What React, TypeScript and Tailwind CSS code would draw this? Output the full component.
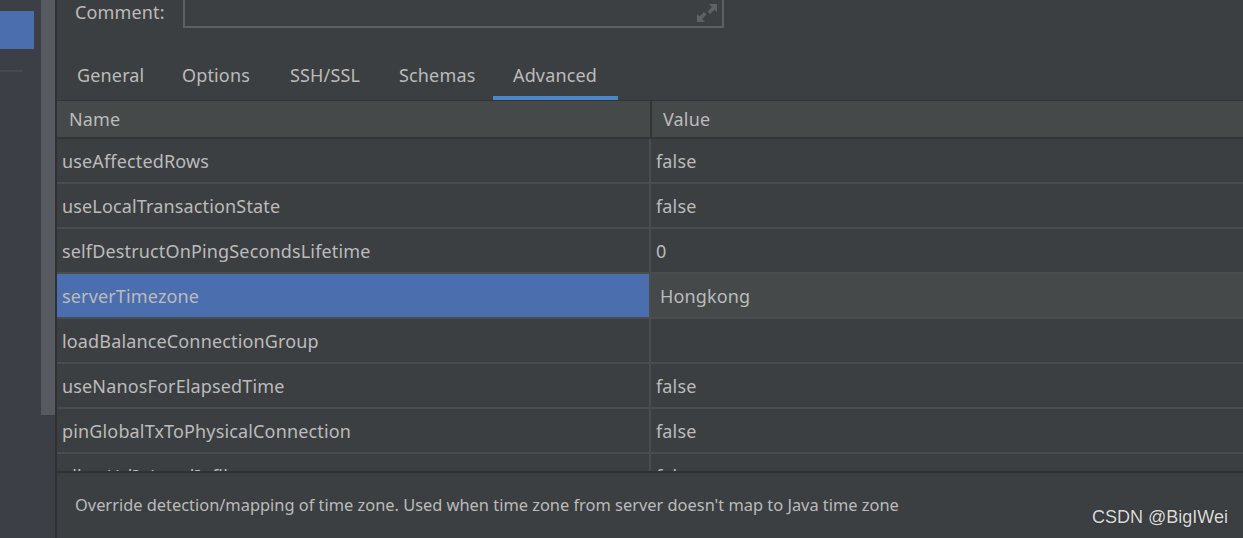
import React from "react";

const rows: { name: string; value: string; selected?: boolean }[] = [
  { name: "useAffectedRows", value: "false" },
  { name: "useLocalTransactionState", value: "false" },
  { name: "selfDestructOnPingSecondsLifetime", value: "0" },
  { name: "serverTimezone", value: "Hongkong", selected: true },
  { name: "loadBalanceConnectionGroup", value: "" },
  { name: "useNanosForElapsedTime", value: "false" },
  { name: "pinGlobalTxToPhysicalConnection", value: "false" },
  { name: "allowUrlInLocalInfile", value: "false" },
];

const tabs = [
  { label: "General", w: "w-[105px]" },
  { label: "Options", w: "w-[108px]" },
  { label: "SSH/SSL", w: "w-[109px]" },
  { label: "Schemas", w: "w-[114px]" },
  { label: "Advanced", w: "w-[125px]", active: true },
];

export default function App() {
  return (
    <div
      className="relative w-[1243px] h-[538px] flex overflow-hidden bg-[#3c3f41] text-[#bbbbbb] tracking-[0.15px]"
      style={{ fontFamily: '"Noto Sans", "Open Sans", sans-serif' }}
    >
      {/* left sidebar */}
      <div className="w-[41px] shrink-0 bg-[#3c3f45] flex flex-col">
        <div className="mt-[11px] h-[38px] w-[34px] bg-[#4b6eaf]" />
        <div className="mt-[21px] h-[2px] w-[23px] bg-[#46494e]" />
      </div>
      {/* scrollbar */}
      <div className="w-[14px] shrink-0 bg-[#3c3f45]">
        <div className="h-[415px] w-full bg-[#575a60]" />
      </div>
      <div className="w-[2px] shrink-0 bg-[#2f3133]" />

      {/* main */}
      <div className="flex-1 flex flex-col min-w-0">
        {/* comment */}
        <div className="h-[30px] flex shrink-0">
          <div className="w-[126px] pl-[18px] text-[18px] leading-[24px]">Comment:</div>
          <div className="relative w-[541px] h-[30px] -mt-[2px] border-2 border-[#5e6060] bg-[#3d4042]">
            <svg
              className="absolute right-[4px] top-[3px]"
              width="22"
              height="20"
              viewBox="0 0 22 20"
              fill="#5f6264"
            >
              <path d="M13 1 L21 1 L21 9 L18.5 6.5 L14 11 L11.5 8.5 L16 4 Z" />
              <path d="M1 19 L1 11 L3.5 13.5 L8 9 L10.5 11.5 L6 16 L9 19 Z" />
            </svg>
          </div>
        </div>

        {/* tabs */}
        <div className="h-[71px] shrink-0 flex items-end border-b border-[#313335]">
          {tabs.map((t) => (
            <div key={t.label} className={`${t.w} h-[41px] flex flex-col shrink-0`}>
              <div className="flex-1 pl-[20px] text-[18px] leading-[24px] pt-[4px]">{t.label}</div>
              <div className={`h-[4px] ${t.active ? "bg-[#4a88c7]" : ""}`} />
            </div>
          ))}
        </div>

        {/* header */}
        <div className="h-[38px] shrink-0 flex bg-[#45494a] border-b-2 border-[#323435]">
          <div className="w-[593px] pl-[12px] pt-[1px] text-[18px] leading-[35px]">Name</div>
          <div className="w-[2px] bg-[#313335]" />
          <div className="flex-1 pl-[11px] pt-[1px] text-[18px] leading-[35px]">Value</div>
        </div>

        {/* rows */}
        <div className="flex-1 overflow-hidden">
          {rows.map((r) => (
            <div key={r.name} className="h-[45px] flex border-b-2 border-[#4a4d4f]">
              <div
                className={`w-[592px] pl-[5px] pt-[1px] text-[18px] leading-[42px] whitespace-nowrap ${
                  r.selected ? "bg-[#4b6eaf]" : ""
                }`}
              >
                {r.name}
              </div>
              <div className="w-[2px] bg-[#4a4d4f]" />
              <div
                className={`flex-1 pt-[1px] text-[18px] leading-[42px] ${
                  r.selected ? "bg-[#45494a] pl-[9px]" : "pl-[5px]"
                }`}
              >
                {r.value}
              </div>
            </div>
          ))}
        </div>

        {/* bottom description */}
        <div className="h-[67px] shrink-0 border-t-2 border-[#2f3133] pl-[18px] pt-[20px] text-[16.4px] leading-[24px] tracking-normal">
          Override detection/mapping of time zone. Used when time zone from server doesn't map to Java time zone
        </div>
      </div>

      {/* watermark */}
      <div
        className="absolute left-[1092px] top-[505px] text-[18px] leading-[24px] text-[#dcdcdc] tracking-normal"
        style={{ fontFamily: '"Liberation Sans", Arial, sans-serif', textShadow: "0 0 1px rgba(0,0,0,0.6)" }}
      >
        CSDN @BigIWei
      </div>
    </div>
  );
}
